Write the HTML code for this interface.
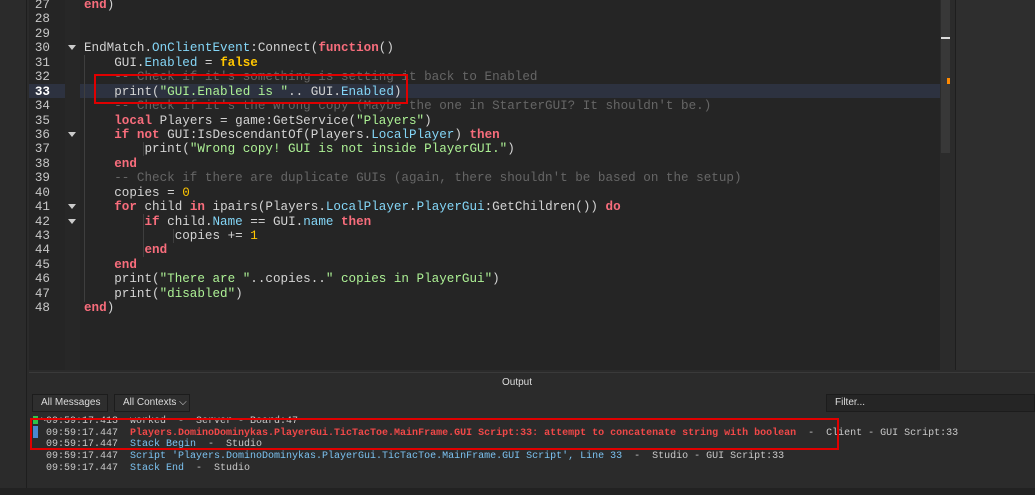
<!DOCTYPE html>
<html><head><meta charset="utf-8"><style>
*{margin:0;padding:0;box-sizing:border-box}
body{width:1035px;height:495px;background:#2b2b2b;position:relative;overflow:hidden;font-family:"Liberation Mono",monospace}
.abs{position:absolute}
#left{left:0;top:0;width:27px;height:495px;background:#2b2b2b;border-right:1px solid #1e1e1e}
#ed{left:29px;top:0;width:911px;height:370px;background:#252525;overflow:hidden}
#fold{left:36px;top:0;width:15px;height:370px;background:#272727}
.ln{position:absolute;left:0;width:21px;text-align:right;color:#c8c8c8;font-size:12.6px;line-height:14.44px}
.cl{position:absolute;left:55px;white-space:pre;color:#d4d4d4;font-size:12.6px;line-height:14.44px}
.k{color:#f86d7c;font-weight:bold}.b{color:#84d6f7}.s{color:#adf195}.y{color:#ffc600;font-weight:bold}.n{color:#ffc600}.c{color:#666666}
.tri{position:absolute;left:39px;width:0;height:0;border-left:4px solid transparent;border-right:4px solid transparent;border-top:5px solid #ccc}
.g{position:absolute;width:1px;background:#3e3e3e}
#sb{left:940px;top:0;width:11px;height:370px;background:#2b2b2b}
#right{left:955px;top:0;width:80px;height:370px;background:#2e2e2e;border-left:1px solid #1e1e1e}
#out{left:29px;top:372px;width:1006px;height:118px;background:#2b2b2b;border-top:1px solid #3a3a3a}
.dd{position:absolute;top:21px;height:18px;background:#2e2e2e;border:1px solid #1c1c1c;color:#ddd;font-family:"Liberation Sans",sans-serif;font-size:10px;line-height:16px;padding-left:8px}
.log{position:absolute;left:17px;white-space:pre;font-size:10px;line-height:11.7px;color:#c9c9c9}
.r{color:#f04848;font-weight:bold}.bl{color:#7cc2f0}
.box{position:absolute;border:2px solid #e00000}
</style></head><body>
<div id="left" class="abs"></div>
<div id="ed" class="abs">
<div class="abs" style="left:0;top:84px;width:911px;height:14px;background:#2d3240"></div>
<div id="fold" class="abs"></div>
<div class="g" style="left:55px;top:55px;height:247px"></div>
<div class="g" style="left:114px;top:142px;height:14px"></div>
<div class="g" style="left:114px;top:214px;height:43px"></div>
<div class="g" style="left:144px;top:229px;height:14px"></div>
<div class="tri" style="top:45px"></div>
<div class="tri" style="top:132px"></div>
<div class="tri" style="top:204px"></div>
<div class="tri" style="top:219px"></div>
<div class="ln" style="top:-2px">27<br>28<br>29<br>30<br>31<br>32<br><b style="color:#fff">33</b><br>34<br>35<br>36<br>37<br>38<br>39<br>40<br>41<br>42<br>43<br>44<br>45<br>46<br>47<br>48</div>
<div class="cl" style="top:-2px"><span class="k">end</span>)


EndMatch.<span class="b">OnClientEvent</span>:Connect(<span class="k">function</span>()
    GUI.<span class="b">Enabled</span> = <span class="y">false</span>
    <span class="c">-- Check if it's something is setting it back to Enabled</span>
    print(<span class="s">"GUI.Enabled is "</span>.. GUI.<span class="b">Enabled</span>)
    <span class="c">-- Check if it's the wrong copy (Maybe the one in StarterGUI? It shouldn't be.)</span>
    <span class="k">local</span> Players = game:GetService(<span class="s">"Players"</span>)
    <span class="k">if not</span> GUI:IsDescendantOf(Players.<span class="b">LocalPlayer</span>) <span class="k">then</span>
        print(<span class="s">"Wrong copy! GUI is not inside PlayerGUI."</span>)
    <span class="k">end</span>
    <span class="c">-- Check if there are duplicate GUIs (again, there shouldn't be based on the setup)</span>
    copies = <span class="n">0</span>
    <span class="k">for</span> child <span class="k">in</span> ipairs(Players.<span class="b">LocalPlayer</span>.<span class="b">PlayerGui</span>:GetChildren()) <span class="k">do</span>
        <span class="k">if</span> child.<span class="b">Name</span> == GUI.<span class="b">name</span> <span class="k">then</span>
            copies += <span class="n">1</span>
        <span class="k">end</span>
    <span class="k">end</span>
    print(<span class="s">"There are "</span>..copies..<span class="s">" copies in PlayerGui"</span>)
    print(<span class="s">"disabled"</span>)
<span class="k">end</span>)</div>
</div>
<div id="sb" class="abs"><div class="abs" style="left:1px;top:0;width:9px;height:153px;background:#383838"></div><div class="abs" style="left:1px;top:37px;width:9px;height:2px;background:#ddd"></div><div class="abs" style="left:7px;top:78px;width:3px;height:6px;background:#ff8a00"></div></div>
<div id="right" class="abs"></div>
<div class="box" style="left:94px;top:74px;width:314px;height:30px"></div>
<div id="out" class="abs">
<div class="abs" style="left:0;top:0;width:1006px;height:20px;color:#ddd;font-family:'Liberation Sans',sans-serif;font-size:10px;line-height:20px;text-align:center;padding-right:30px">Output</div>
<div class="dd" style="left:3px;width:76px">All Messages ⌵</div>
<div class="dd" style="left:85px;width:76px">All Contexts ⌵</div>
<div class="dd" style="left:797px;width:209px;background:#252525">Filter...</div>
<div class="abs" style="left:4px;top:43px;width:5px;height:8px;background:#2ec24a"></div>
<div class="abs" style="left:4px;top:53px;width:5px;height:12px;background:#4a88d0"></div>
<div class="log" style="top:43px">09:59:17.413  worked  -  Server - Board:47
09:59:17.447  <span class="r">Players.DominoDominykas.PlayerGui.TicTacToe.MainFrame.GUI Script:33: attempt to concatenate string with boolean</span>  -  Client - GUI Script:33
09:59:17.447  <span class="bl">Stack Begin</span>  -  Studio
09:59:17.447  <span class="bl">Script 'Players.DominoDominykas.PlayerGui.TicTacToe.MainFrame.GUI Script', Line 33</span>  -  Studio - GUI Script:33
09:59:17.447  <span class="bl">Stack End</span>  -  Studio</div>
</div>
<div class="box" style="left:30px;top:418px;width:809px;height:32px"></div>
<div class="abs" style="left:0;top:488px;width:1035px;height:7px;background:#222"></div>
</body></html>
